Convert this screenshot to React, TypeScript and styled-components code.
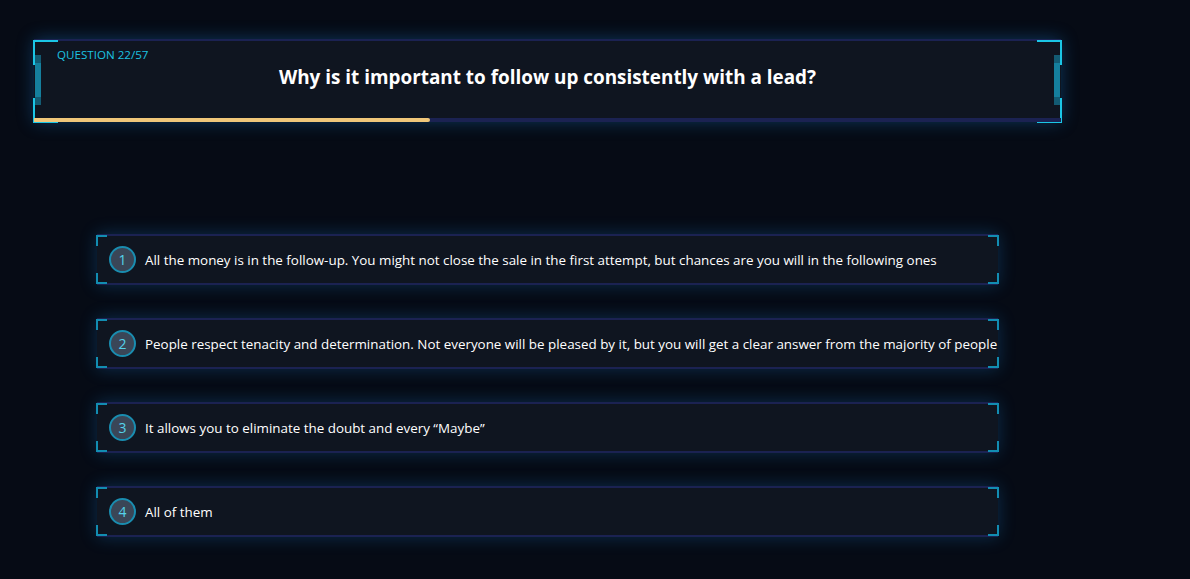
import styled, { createGlobalStyle } from 'styled-components';

const answers = [
  'All the money is in the follow-up. You might not close the sale in the first attempt, but chances are you will in the following ones',
  'People respect tenacity and determination. Not everyone will be pleased by it, but you will get a clear answer from the majority of people',
  'It allows you to eliminate the doubt and every \u201cMaybe\u201d',
  'All of them',
];

function App() {
  const current = 22;
  const total = 57;

  return (
    <Page>
      <GlobalStyle />
      <QuestionCard>
        <Corner $v="top" $h="left" $size={25} />
        <Corner $v="top" $h="right" $size={25} />
        <Corner $v="bottom" $h="left" $size={25} />
        <Corner $v="bottom" $h="right" $size={25} />
        <SideBar $side="left" />
        <SideBar $side="right" />
        <Counter>
          QUESTION {current}/{total}
        </Counter>
        <Title>Why is it important to follow up consistently with a lead?</Title>
        <Track>
          <Fill style={{ width: `${(current / total) * 100}%` }} />
        </Track>
      </QuestionCard>

      <AnswerList>
        {answers.map((text, i) => (
          <Answer key={i}>
            <Corner $v="top" $h="left" $size={11} />
            <Corner $v="top" $h="right" $size={11} />
            <Corner $v="bottom" $h="left" $size={11} />
            <Corner $v="bottom" $h="right" $size={11} />
            <Num>{i + 1}</Num>
            <AnswerText>{text}</AnswerText>
          </Answer>
        ))}
      </AnswerList>
    </Page>
  );
}

export default App;

const GlobalStyle = createGlobalStyle`
  body {
    margin: 0;
    background: #060b15;
    font-family: 'Open Sans', 'Noto Sans', sans-serif;
  }
`;

const Page = styled.div`
  min-height: 579px;
  padding: 39px 0 0 34px;
  box-sizing: border-box;
`;

const QuestionCard = styled.section`
  position: relative;
  width: 1027px;
  height: 83px;
  box-sizing: border-box;
  background: #0f1520;
  border-top: 2px solid #1b2252;
  display: flex;
  flex-direction: column;
  box-shadow: 0 0 16px rgba(24, 120, 200, 0.4);
`;

const Corner = styled.span<{ $v: 'top' | 'bottom'; $h: 'left' | 'right'; $size: number }>`
  position: absolute;
  width: ${(p) => p.$size}px;
  height: ${(p) => p.$size}px;
  ${(p) => p.$v}: -1px;
  ${(p) => p.$h}: -1px;
  border-${(p) => p.$v}: 2px solid ${(p) => (p.$size > 20 ? '#1bc6e6' : '#128db2')};
  border-${(p) => p.$h}: 2px solid ${(p) => (p.$size > 20 ? '#1bc6e6' : '#128db2')};
  box-sizing: border-box;
  z-index: 1;
`;

const SideBar = styled.span<{ $side: 'left' | 'right' }>`
  position: absolute;
  top: 14px;
  ${(p) => p.$side}: 1px;
  width: 6px;
  height: 50px;
  background: linear-gradient(
    #135b73 0 8px,
    #157f9d 8px 42px,
    #135b73 42px
  );
`;

const Counter = styled.div`
  padding: 6px 0 0 23px;
  font-size: 11.6px;
  line-height: 16px;
  color: #1cc3e0;
`;

const Title = styled.h1`
  margin: 0;
  padding-top: 2px;
  text-align: center;
  font-size: 18.9px;
  line-height: 24px;
  font-weight: 700;
  color: #ffffff;
`;

const Track = styled.div`
  margin-top: auto;
  height: 4px;
  background: #1b2252;
  position: relative;
  z-index: 2;
`;

const Fill = styled.div`
  height: 100%;
  background: #f0c77a;
  border-radius: 0 2px 2px 0;
`;

const AnswerList = styled.div`
  display: flex;
  flex-direction: column;
  gap: 33px;
  margin: 112px 0 0 63px;
  width: 901px;
`;

const Answer = styled.div`
  position: relative;
  height: 51px;
  box-sizing: border-box;
  background: #0f1520;
  border-top: 2px solid #1b2252;
  border-bottom: 2px solid #1b2252;
  display: flex;
  align-items: center;
  gap: 9px;
  padding-left: 12px;
  box-shadow: 0 0 16px rgba(24, 120, 200, 0.32);
`;

const Num = styled.span`
  flex: none;
  width: 27px;
  height: 27px;
  box-sizing: border-box;
  border: 2px solid #1a8db0;
  border-radius: 50%;
  background: #3a4657;
  color: #55d2ea;
  font-size: 14px;
  display: flex;
  align-items: center;
  justify-content: center;
`;

const AnswerText = styled.span`
  font-size: 13.4px;
  color: #ffffff;
  white-space: nowrap;
`;
